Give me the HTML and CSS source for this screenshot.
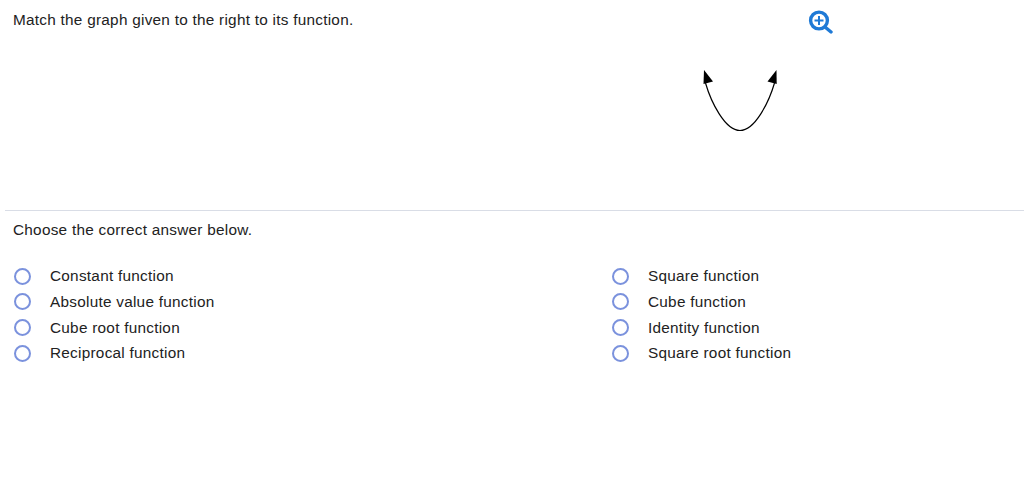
FILE: index.html
```html
<!DOCTYPE html>
<html lang="en">
<head>
<meta charset="utf-8">
<title>Match the graph</title>
<link rel="stylesheet" href="styles.css">
</head>
<body>
<section class="question">
  <p class="prompt">Match the graph given to the right to its function.</p>
  <div class="figure">
    <svg class="zoom-icon" width="26" height="26" viewBox="0 0 26 26" aria-hidden="true">
      <circle cx="12" cy="11.500" r="8.400" fill="#fff" stroke="#1f7ad6" stroke-width="3.400"/>
      <path d="M18 18l6 5" stroke="#1f7ad6" stroke-width="3.400" stroke-linecap="round"/>
      <path d="M7.500 11.500h9M12 7v9" stroke="#1f7ad6" stroke-width="2"/>
    </svg>
    <svg class="graph" width="82" height="66" viewBox="0 0 82 66" aria-hidden="true">
      <path d="M7.500 15C13 34 27 62.500 42 62.500S71 34 76.500 15" fill="none" stroke="#000" stroke-width="1.200"/>
      <path d="M6 2L15 13.500L5.500 16Z" fill="#000"/>
      <path d="M78.500 2L69.500 13.500L78.700 16Z" fill="#000"/>
    </svg>
  </div>
</section>
<section class="answers">
  <p class="instruction">Choose the correct answer below.</p>
  <ul class="options">
    <li class="option"><span class="radio"></span>Constant function</li>
    <li class="option"><span class="radio"></span>Square function</li>
    <li class="option"><span class="radio"></span>Absolute value function</li>
    <li class="option"><span class="radio"></span>Cube function</li>
    <li class="option"><span class="radio"></span>Cube root function</li>
    <li class="option"><span class="radio"></span>Identity function</li>
    <li class="option"><span class="radio"></span>Reciprocal function</li>
    <li class="option"><span class="radio"></span>Square root function</li>
  </ul>
</section>
</body>
</html>
```
FILE: styles.css
```css
* { box-sizing: border-box; }
html, body { margin: 0; padding: 0; background: #fff; }
body {
  font-family: "Liberation Sans", Arial, sans-serif;
  font-size: 15.33px;
  letter-spacing: 0.26px;
  color: #222;
  height: 489px;
  overflow: hidden;
}
p { margin: 0; }
.question {
  display: flex;
  justify-content: space-between;
  height: 211px;
  margin-left: 5px;
  padding: 11px 191px 0 8px;
  border-bottom: 1px solid #d9dde6;
}
.prompt { line-height: 18px; }
.figure {
  display: flex;
  flex-direction: column;
  align-items: flex-end;
  width: 130px;
}
.zoom-icon { display: block; margin-top: -2px; }
.graph { display: block; margin: 33px 53px 0 0; }
.answers { padding: 10px 0 0 13px; }
.instruction { line-height: 18px; }
.options {
  list-style: none;
  margin: 24.500px 0 0;
  padding: 0;
  display: grid;
  grid-template-columns: 598px 1fr;
  grid-auto-rows: 25.670px;
}
.option {
  display: flex;
  align-items: center;
}
.radio {
  flex: none;
  width: 17px;
  height: 17px;
  margin: 0 19px 0 1px;
  border: 2px solid #7b92dd;
  border-radius: 50%;
  background: #fff;
}
```
